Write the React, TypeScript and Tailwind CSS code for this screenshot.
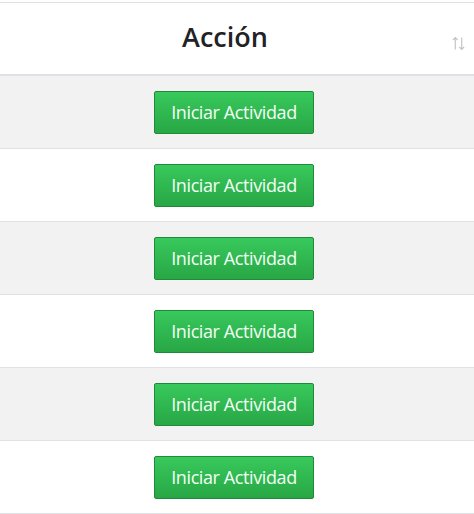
const rows = [0, 1, 2, 3, 4, 5];

function SortIcon() {
    return (
        <svg width="15" height="15" viewBox="0 0 14 14" fill="none" stroke="#c4c4c4" strokeWidth="1.1">
            <path d="M4 12.5V1.5M1.8 3.7L4 1.5l2.2 2.2" />
            <path d="M10 1.5v11M7.8 10.3L10 12.5l2.2-2.2" />
        </svg>
    );
}

export default function App() {
    return (
        <div className="w-[474px] h-[514px] overflow-hidden bg-white pt-[2px]" style={{ fontFamily: '"Open Sans", "Noto Sans", sans-serif' }}>
            <div className="border-t border-[#dee2e6]">
                <div className="relative h-[73px] flex items-center justify-center pr-[24px] border-b-2 border-[#dee2e6]">
                    <span className="text-[27px] font-[560] text-[#1f2326] -mt-[3px]">Acción</span>
                    <span className="absolute right-[8px] top-[33px]">
                        <SortIcon />
                    </span>
                </div>
                {rows.map((i) => (
                    <div
                        key={i}
                        className={`h-[73px] flex items-center justify-center pr-[6px] border-b border-[#dee2e6] ${i % 2 === 0 ? "bg-[#f2f2f2]" : "bg-white"}`}
                    >
                        <button
                            type="button"
                            className="w-[160px] h-[43px] rounded-[2px] border border-[#1f8a3a] bg-gradient-to-b from-[#38c95c] to-[#28a745] text-[#f4fff6] text-[18px] tracking-[-0.4px]"
                        >
                            Iniciar Actividad
                        </button>
                    </div>
                ))}
            </div>
        </div>
    );
}
